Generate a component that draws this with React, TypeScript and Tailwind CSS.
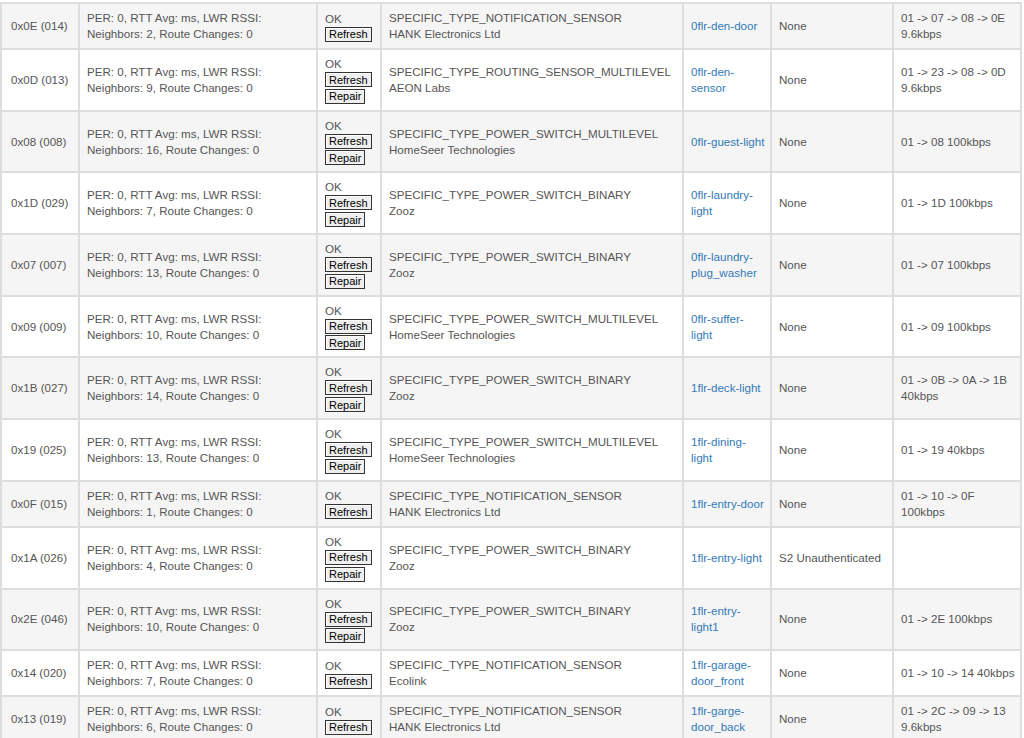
import React from 'react'

type Node = {
  id: string
  neighbors: number
  repair: boolean
  type: string
  maker: string
  name: string[]
  security: string
  route: string[]
}

const nodes: Node[] = [
  { id: '0x0E (014)', neighbors: 2, repair: false, type: 'SPECIFIC_TYPE_NOTIFICATION_SENSOR', maker: 'HANK Electronics Ltd', name: ['0flr-den-door'], security: 'None', route: ['01 -> 07 -> 08 -> 0E', '9.6kbps'] },
  { id: '0x0D (013)', neighbors: 9, repair: true, type: 'SPECIFIC_TYPE_ROUTING_SENSOR_MULTILEVEL', maker: 'AEON Labs', name: ['0flr-den-', 'sensor'], security: 'None', route: ['01 -> 23 -> 08 -> 0D', '9.6kbps'] },
  { id: '0x08 (008)', neighbors: 16, repair: true, type: 'SPECIFIC_TYPE_POWER_SWITCH_MULTILEVEL', maker: 'HomeSeer Technologies', name: ['0flr-guest-light'], security: 'None', route: ['01 -> 08 100kbps'] },
  { id: '0x1D (029)', neighbors: 7, repair: true, type: 'SPECIFIC_TYPE_POWER_SWITCH_BINARY', maker: 'Zooz', name: ['0flr-laundry-', 'light'], security: 'None', route: ['01 -> 1D 100kbps'] },
  { id: '0x07 (007)', neighbors: 13, repair: true, type: 'SPECIFIC_TYPE_POWER_SWITCH_BINARY', maker: 'Zooz', name: ['0flr-laundry-', 'plug_washer'], security: 'None', route: ['01 -> 07 100kbps'] },
  { id: '0x09 (009)', neighbors: 10, repair: true, type: 'SPECIFIC_TYPE_POWER_SWITCH_MULTILEVEL', maker: 'HomeSeer Technologies', name: ['0flr-suffer-', 'light'], security: 'None', route: ['01 -> 09 100kbps'] },
  { id: '0x1B (027)', neighbors: 14, repair: true, type: 'SPECIFIC_TYPE_POWER_SWITCH_BINARY', maker: 'Zooz', name: ['1flr-deck-light'], security: 'None', route: ['01 -> 0B -> 0A -> 1B', '40kbps'] },
  { id: '0x19 (025)', neighbors: 13, repair: true, type: 'SPECIFIC_TYPE_POWER_SWITCH_MULTILEVEL', maker: 'HomeSeer Technologies', name: ['1flr-dining-', 'light'], security: 'None', route: ['01 -> 19 40kbps'] },
  { id: '0x0F (015)', neighbors: 1, repair: false, type: 'SPECIFIC_TYPE_NOTIFICATION_SENSOR', maker: 'HANK Electronics Ltd', name: ['1flr-entry-door'], security: 'None', route: ['01 -> 10 -> 0F', '100kbps'] },
  { id: '0x1A (026)', neighbors: 4, repair: true, type: 'SPECIFIC_TYPE_POWER_SWITCH_BINARY', maker: 'Zooz', name: ['1flr-entry-light'], security: 'S2 Unauthenticated', route: [] },
  { id: '0x2E (046)', neighbors: 10, repair: true, type: 'SPECIFIC_TYPE_POWER_SWITCH_BINARY', maker: 'Zooz', name: ['1flr-entry-', 'light1'], security: 'None', route: ['01 -> 2E 100kbps'] },
  { id: '0x14 (020)', neighbors: 7, repair: false, type: 'SPECIFIC_TYPE_NOTIFICATION_SENSOR', maker: 'Ecolink', name: ['1flr-garage-', 'door_front'], security: 'None', route: ['01 -> 10 -> 14 40kbps'] },
  { id: '0x13 (019)', neighbors: 6, repair: false, type: 'SPECIFIC_TYPE_NOTIFICATION_SENSOR', maker: 'HANK Electronics Ltd', name: ['1flr-garge-', 'door_back'], security: 'None', route: ['01 -> 2C -> 09 -> 13', '9.6kbps'] },
]

const cell = 'border-2 border-[#ddd] py-[6px] pl-[7px] pr-[2px] align-middle'

const SmallButton = ({ label, first }: { label: string; first?: boolean }) => (
  <button
    className={`block h-[15px] border border-[#333] bg-[#efefef] px-[3px] text-[11px] leading-[12px] text-black shadow-[inset_1px_1px_0_#fff] ${first ? '' : 'mt-[1.7px]'}`}
  >
    {label}
  </button>
)

// lines kept as written so the narrow columns break the same way
const Lines = ({ lines }: { lines: string[] }) => (
  <>
    {lines.map((l) => (
      <span key={l} className="block whitespace-nowrap">
        {l}
      </span>
    ))}
  </>
)

const App = () => {
  return (
    <div className="min-h-screen bg-white pt-[2px] font-['Liberation_Sans',Arial,sans-serif] text-[11.6px] leading-4 text-[#555]">
      <table className="w-[1022px] table-fixed border-collapse">
        <colgroup>
          <col className="w-[78px]" />
          <col className="w-[238px]" />
          <col className="w-[64px]" />
          <col className="w-[302px]" />
          <col className="w-[88px]" />
          <col className="w-[122px]" />
          <col className="w-[128px]" />
        </colgroup>
        <tbody>
          {nodes.map((n, i) => (
            <tr key={n.id} className={i % 2 === 0 ? 'bg-[#f5f5f5]' : 'bg-white'}>
              <td className={`${cell} pl-[9px]`}>{n.id}</td>
              <td className={cell}>
                PER: 0, RTT Avg: ms, LWR RSSI:
                <br />
                Neighbors: {n.neighbors}, Route Changes: 0
              </td>
              <td className={cell}>
                <div>OK</div>
                <SmallButton label="Refresh" first />
                {n.repair && <SmallButton label="Repair" />}
              </td>
              <td className={cell}>
                {n.type}
                <br />
                {n.maker}
              </td>
              <td className={cell}>
                <a href="#" className="text-[#337ab7]">
                  <Lines lines={n.name} />
                </a>
              </td>
              <td className={cell}>{n.security}</td>
              <td className={cell}>
                <Lines lines={n.route} />
              </td>
            </tr>
          ))}
        </tbody>
      </table>
    </div>
  )
}

export default App
